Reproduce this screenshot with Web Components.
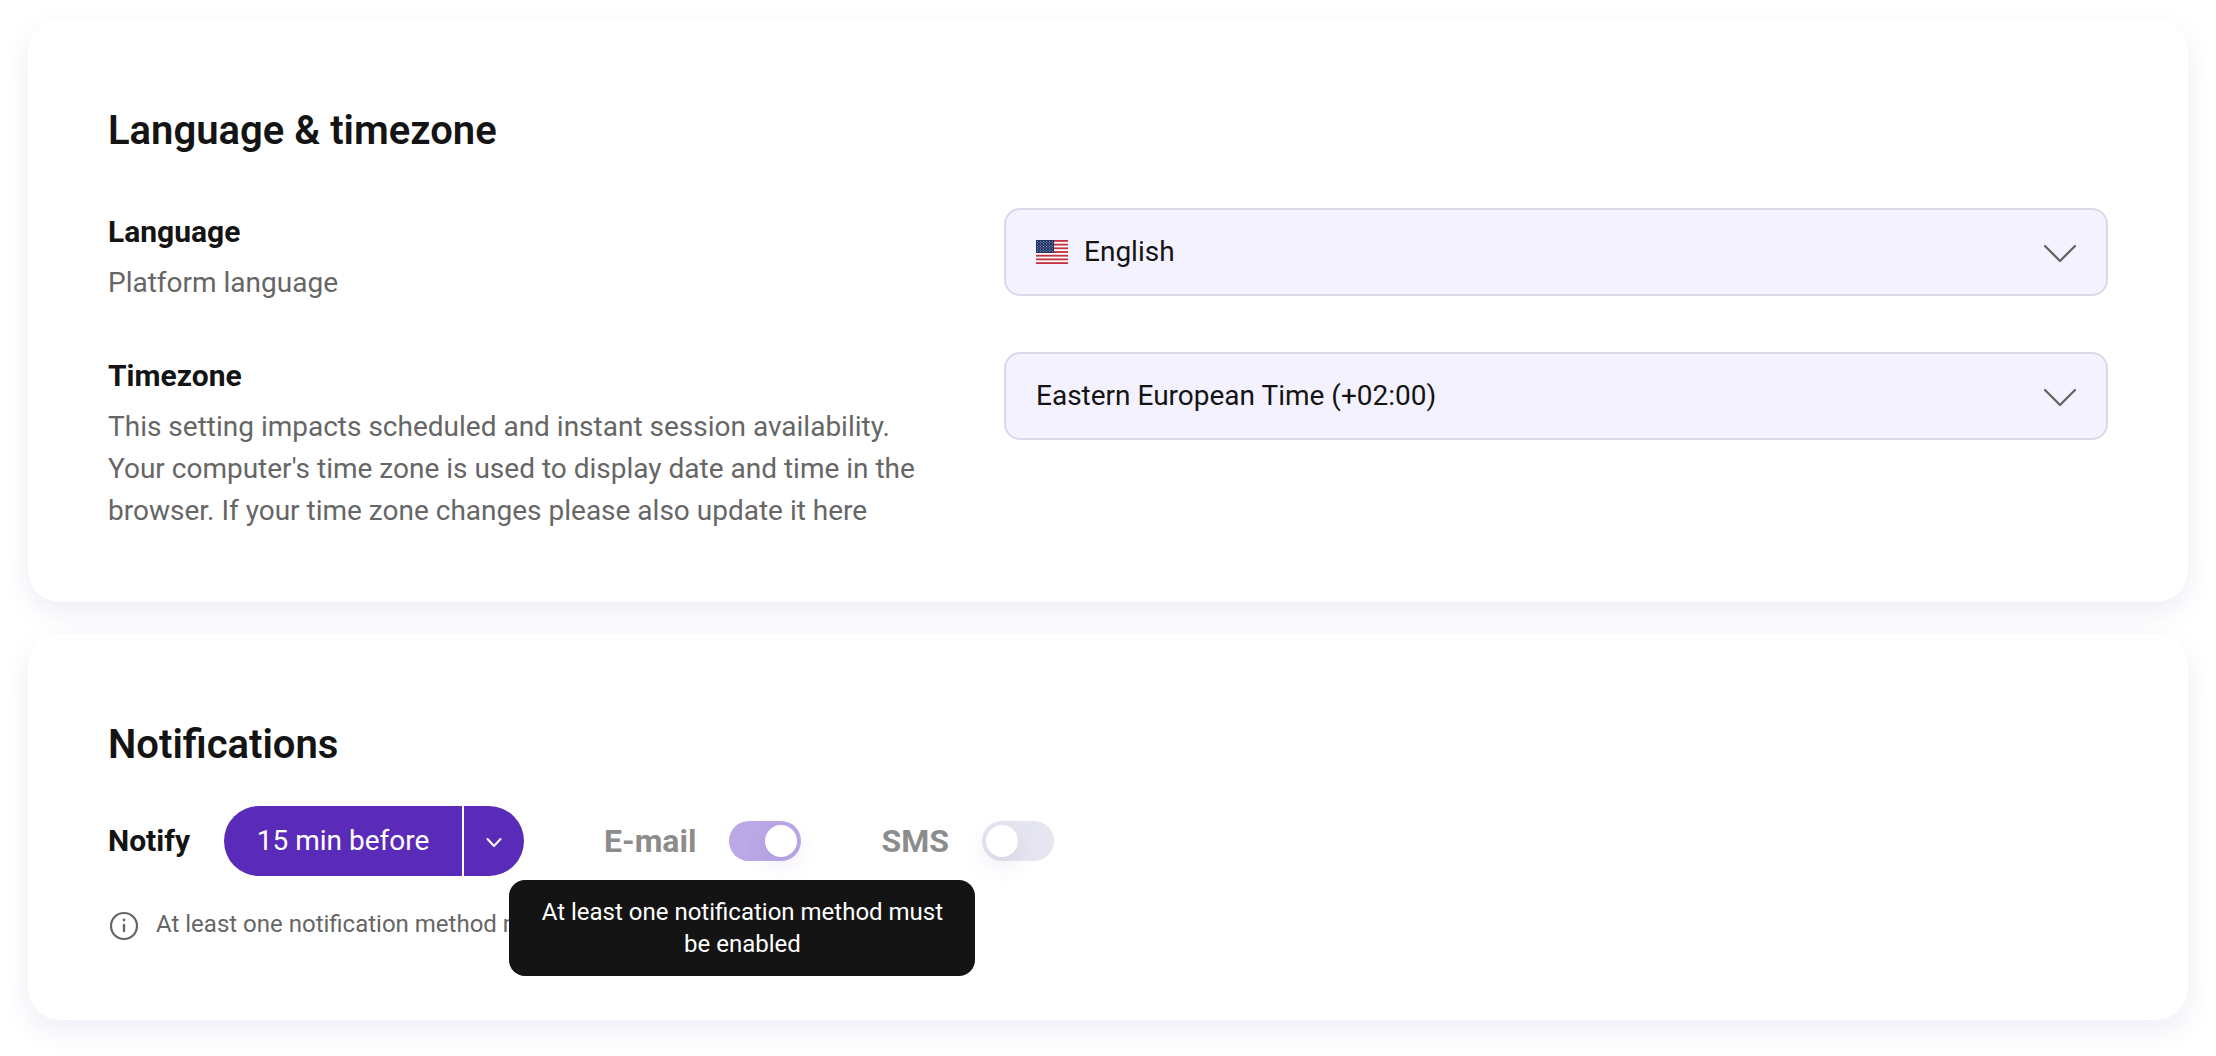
<!DOCTYPE html>
<html lang="en">
<head>
<meta charset="utf-8">
<title>Settings</title>
<style>
  body {
    margin: 0;
    padding: 20px 28px 36px;
    background: #fff;
    color: #141414;
    font-family: Roboto, "Liberation Sans", sans-serif;
    font-size: 28px;
    line-height: 42px;
  }
  main {
    display: flex;
    flex-direction: column;
    gap: 32px;
  }
</style>
</head>
<body>
<main>
  <settings-card heading="Language &amp; timezone">
    <settings-list>
      <setting-select label="Language" options="English">
        Platform language
        <flag-us slot="icon"></flag-us>
      </setting-select>
      <setting-select label="Timezone" options="Eastern European Time (+02:00)">
        This setting impacts scheduled and instant session availability. Your computer's time zone is used to display date and time in the browser. If your time zone changes please also update it here
      </setting-select>
    </settings-list>
  </settings-card>

  <settings-card heading="Notifications" compact>
    <notify-bar label="Notify">
      <split-button>15 min before</split-button>
      <toggle-switch label="E-mail" checked>
        <tool-tip slot="tooltip">At least one notification method must be enabled</tool-tip>
      </toggle-switch>
      <toggle-switch label="SMS"></toggle-switch>
    </notify-bar>
    <info-note>At least one notification method must be enabled</info-note>
  </settings-card>
</main>

<script>
class SettingsCard extends HTMLElement {
  constructor() {
    super();
    this.attachShadow({ mode: 'open' });
    this.shadowRoot.innerHTML = `
      <style>
        :host {
          display: block;
          padding: 80px 80px 70px;
          border-radius: 32px;
          background: #fff;
          box-shadow: 0 10px 28px rgba(70, 60, 160, 0.09);
        }
        :host([compact]) {
          padding-bottom: 78px;
        }
        h2 {
          margin: 0 0 46px;
          font-size: 40px;
          font-weight: 600;
          line-height: 62px;
        }
        :host([compact]) h2 {
          margin-bottom: 30px;
        }
      </style>
      <h2></h2>
      <slot></slot>
    `;
    this.shadowRoot.querySelector('h2').textContent = this.getAttribute('heading');
  }
}

class SettingsList extends HTMLElement {
  constructor() {
    super();
    this.attachShadow({ mode: 'open' });
    this.shadowRoot.innerHTML = `
      <style>
        :host {
          display: flex;
          flex-direction: column;
          gap: 48px;
        }
      </style>
      <slot></slot>
    `;
  }
}

class SettingSelect extends HTMLElement {
  constructor() {
    super();
    this.attachShadow({ mode: 'open' });
    this.shadowRoot.innerHTML = `
      <style>
        :host {
          display: grid;
          grid-template-columns: minmax(0, 35fr) minmax(0, 46fr);
          gap: 56px;
          align-items: start;
        }
        label {
          display: block;
          font-size: 30px;
          font-weight: 700;
          line-height: 48px;
        }
        p {
          margin: 6px 0 0;
          color: #666;
        }
        .field {
          position: relative;
          display: flex;
          align-items: center;
          gap: 16px;
          box-sizing: border-box;
          height: 88px;
          padding-left: 30px;
          border: 2px solid #dcd8ec;
          border-radius: 16px;
          background: #f4f2ff;
        }
        select {
          flex: 1;
          min-width: 0;
          height: 100%;
          padding: 0 80px 0 0;
          border: 0;
          outline: 0;
          appearance: none;
          background: transparent;
          color: inherit;
          font: inherit;
        }
        svg {
          position: absolute;
          right: 30px;
          top: 50%;
          margin-top: -16px;
          pointer-events: none;
        }
      </style>
      <div>
        <label for="value"></label>
        <p><slot></slot></p>
      </div>
      <div class="field">
        <slot name="icon"></slot>
        <select id="value"></select>
        <svg width="32" height="32" viewBox="0 0 32 32" fill="none" stroke="#666" stroke-width="2.400" stroke-linecap="round" stroke-linejoin="round">
          <path d="M1 10l15 15 15-15"/>
        </svg>
      </div>
    `;
    this.shadowRoot.querySelector('label').textContent = this.getAttribute('label');
    const select = this.shadowRoot.querySelector('select');
    this.getAttribute('options').split('|').forEach((text) => {
      select.add(new Option(text));
    });
  }
}

class FlagUs extends HTMLElement {
  constructor() {
    super();
    this.attachShadow({ mode: 'open' });
    // 13 stripes, then the canton with its rows of stars
    let stripes = '';
    for (let i = 0; i < 13; i += 2) {
      stripes += `<rect y="${i * 24 / 13}" width="32" height="${24 / 13}" fill="#c4323f"/>`;
    }
    let stars = '';
    for (let row = 0; row < 9; row++) {
      const count = row % 2 ? 5 : 6;
      for (let i = 0; i < count; i++) {
        const x = (row % 2 ? 3 : 1.5) + i * 3;
        stars += `<circle cx="${x}" cy="${1.3 + row * 1.28}" r="0.5"/>`;
      }
    }
    this.shadowRoot.innerHTML = `
      <style>
        :host {
          display: block;
          width: 32px;
          height: 24px;
        }
        svg {
          display: block;
        }
      </style>
      <svg width="32" height="24" viewBox="0 0 32 24" aria-hidden="true">
        <rect width="32" height="24" fill="#fff"/>
        ${stripes}
        <rect width="18" height="12.9" fill="#1c3166"/>
        <g fill="#a9b2cc">${stars}</g>
      </svg>
    `;
  }
}

class NotifyBar extends HTMLElement {
  constructor() {
    super();
    this.attachShadow({ mode: 'open' });
    this.shadowRoot.innerHTML = `
      <style>
        :host {
          display: flex;
          align-items: center;
          gap: 34px;
        }
        .controls {
          display: flex;
          align-items: center;
          gap: 80px;
        }
        .label {
          font-size: 30px;
          font-weight: 700;
        }
      </style>
      <span class="label"></span>
      <div class="controls"><slot></slot></div>
    `;
    this.shadowRoot.querySelector('.label').textContent = this.getAttribute('label');
  }
}

class SplitButton extends HTMLElement {
  constructor() {
    super();
    this.attachShadow({ mode: 'open' });
    this.shadowRoot.innerHTML = `
      <style>
        :host {
          display: flex;
          gap: 2px;
          height: 70px;
        }
        button {
          display: flex;
          align-items: center;
          justify-content: center;
          border: 0;
          background: #5a2bb8;
          color: #fff;
          font: inherit;
          cursor: pointer;
        }
        .main {
          min-width: 238px;
          padding: 0 32px;
          border-radius: 35px 0 0 35px;
        }
        .more {
          width: 60px;
          padding: 0;
          border-radius: 0 35px 35px 0;
        }
      </style>
      <button class="main" type="button"><slot></slot></button>
      <button class="more" type="button" aria-label="Choose time">
        <svg width="16" height="16" viewBox="0 0 16 16" fill="none" stroke="#fff" stroke-width="2" stroke-linecap="round" stroke-linejoin="round">
          <path d="M1.500 6L8 13l6.500-7"/>
        </svg>
      </button>
    `;
  }
}

class ToggleSwitch extends HTMLElement {
  constructor() {
    super();
    this.attachShadow({ mode: 'open' });
    this.shadowRoot.innerHTML = `
      <style>
        :host {
          position: relative;
          display: flex;
          align-items: center;
          gap: 33px;
        }
        label {
          color: #8c8c8c;
          font-size: 32px;
          font-weight: 700;
        }
        input {
          display: flex;
          box-sizing: border-box;
          width: 72px;
          height: 40px;
          margin: 0;
          padding: 4px;
          appearance: none;
          border-radius: 20px;
          background: #e6e6f0;
        }
        input::before {
          content: "";
          width: 32px;
          height: 32px;
          border-radius: 50%;
          background: #fff;
          box-shadow: 0 8px 24px rgba(80, 60, 160, 0.12);
        }
        input:checked {
          justify-content: flex-end;
          background: #bba8e6;
        }
      </style>
      <label for="switch"></label>
      <input id="switch" type="checkbox" role="switch" disabled>
      <slot name="tooltip"></slot>
    `;
    this.shadowRoot.querySelector('label').textContent = this.getAttribute('label');
    this.shadowRoot.querySelector('input').checked = this.hasAttribute('checked');
  }
}

class ToolTip extends HTMLElement {
  constructor() {
    super();
    this.attachShadow({ mode: 'open' });
    this.shadowRoot.innerHTML = `
      <style>
        :host {
          position: absolute;
          z-index: 1;
          top: 60px;
          right: -174px;
          box-sizing: border-box;
          width: 466px;
          padding: 16px 28px;
          border-radius: 16px;
          background: #141414;
          color: #fff;
          font-size: 24px;
          line-height: 32px;
          text-align: center;
        }
      </style>
      <slot></slot>
    `;
    this.setAttribute('role', 'tooltip');
  }
}

class InfoNote extends HTMLElement {
  constructor() {
    super();
    this.attachShadow({ mode: 'open' });
    this.shadowRoot.innerHTML = `
      <style>
        :host {
          display: flex;
          align-items: center;
          gap: 16px;
          margin-top: 30px;
          color: #666;
          font-size: 24px;
          line-height: 36px;
        }
      </style>
      <svg width="32" height="36" viewBox="0 0 32 36" fill="none" stroke="#666" stroke-width="2.200" stroke-linecap="round" aria-hidden="true">
        <circle cx="16" cy="20" r="13"/>
        <path d="M16 19v6" stroke-width="2.400"/>
        <circle cx="16" cy="14" r="1.400" fill="#666" stroke="none"/>
      </svg>
      <span><slot></slot></span>
    `;
  }
}

customElements.define('settings-card', SettingsCard);
customElements.define('settings-list', SettingsList);
customElements.define('setting-select', SettingSelect);
customElements.define('flag-us', FlagUs);
customElements.define('notify-bar', NotifyBar);
customElements.define('split-button', SplitButton);
customElements.define('toggle-switch', ToggleSwitch);
customElements.define('tool-tip', ToolTip);
customElements.define('info-note', InfoNote);
</script>
</body>
</html>
